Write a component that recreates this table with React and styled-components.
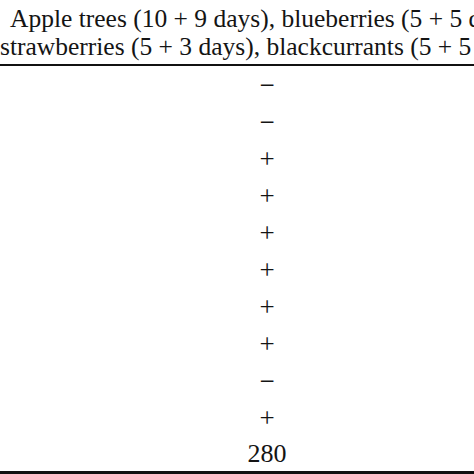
import React from 'react';
import styled, { createGlobalStyle } from 'styled-components';

const Global = createGlobalStyle`
  html, body {
    margin: 0;
    padding: 0;
    background: #fff;
  }
  body {
    width: 474px;
    height: 474px;
    overflow: hidden;
    font-family: "Liberation Serif", "DejaVu Serif", serif;
    color: #141414;
  }
`;

const Table = styled.div`
  width: 474px;
  height: 474px;
  display: flex;
  flex-direction: column;
  overflow: hidden;
`;

const Head = styled.div`
  padding-top: 5px;
  height: 66px;
  box-sizing: border-box;
  border-bottom: 2px solid #111;
`;

const HeadLine = styled.div`
  font-size: 25.5px;
  line-height: 28px;
  white-space: nowrap;
  padding-left: ${p => p.indent}px;
`;

const Body = styled.div`
  flex: 1;
  display: flex;
  flex-direction: column;
  padding-top: 1px;
  border-bottom: 3px solid #111;
`;

const Cell = styled.div`
  height: ${p => (p.num ? 33 : 37)}px;
  display: flex;
  align-items: center;
  justify-content: center;
  padding-left: 60px;
  font-size: ${p => (p.num ? 26 : 27)}px;
  line-height: 1;
`;

const rows = ['−', '−', '+', '+', '+', '+', '+', '+', '−', '+'];

export default function App() {
  return (
    <>
      <Global />
      <Table>
        <Head>
          <HeadLine indent={10}>Apple trees (10 + 9 days), blueberries (5 + 5 days),</HeadLine>
          <HeadLine indent={0}>strawberries (5 + 3 days), blackcurrants (5 + 5 days)</HeadLine>
        </Head>
        <Body>
          {rows.map((r, i) => (
            <Cell key={i}>{r}</Cell>
          ))}
          <Cell num>280</Cell>
        </Body>
      </Table>
    </>
  );
}
